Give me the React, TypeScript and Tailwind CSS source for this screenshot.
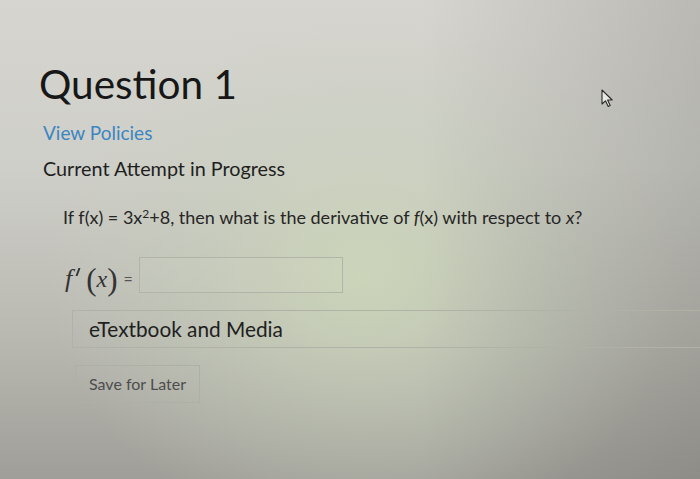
export default function App() {
  return (
    <div
      className="relative h-[479px] w-[700px] overflow-hidden bg-[#bdbdb6] font-['Lato','Liberation_Sans',sans-serif] text-[#1e1e1e]"
    >
      {/* screen glow from the photo */}
      <div className="absolute inset-0 bg-[linear-gradient(180deg,#d6d5d0_0%,#cfcfc9_35%,#b9b9b2_70%,#9f9e98_100%)]" />
      <div className="absolute inset-0 bg-[radial-gradient(ellipse_45%_55%_at_52%_58%,rgba(205,216,185,0.85)_0%,rgba(200,208,186,0.4)_55%,rgba(200,208,186,0)_100%)]" />
      <div className="absolute inset-0 bg-[linear-gradient(90deg,rgba(0,0,0,0)_60%,rgba(60,60,55,0.18)_100%)]" />

      <div className="relative flex flex-col items-start pl-[39px] pt-[60px]">
        <h1 className="text-[40.5px] leading-[48px] font-normal text-[#171717]">Question 1</h1>

        <a className="ml-[4px] mt-[13px] text-[19px] leading-[23px] text-[#3b86c2]">View Policies</a>

        <p className="ml-[4px] mt-[12px] text-[19.8px] leading-[24px] text-[#1f1f1f]">
          Current Attempt in Progress
        </p>

        <p className="ml-[24px] mt-[26px] text-[18px] leading-[22px] text-[#262626]">
          If f(x) = 3x<sup className="text-[12px]">2</sup>+8, then what is the derivative of{" "}
          <i>f</i>(x) with respect to <i>x</i>?
        </p>

        <div className="ml-[26px] mt-[29px] flex items-center">
          <span className="relative top-[4px] flex w-[74px] items-center font-['Liberation_Serif',serif] text-[#333]">
            <i className="text-[26px] leading-none">f</i>
            <span className="relative -top-[7px] ml-[5px] h-[8px] w-[2px] skew-x-[-20deg] bg-[#333]" />
            <span className="ml-[7px] text-[31px] leading-none">(</span>
            <i className="text-[24px] leading-none">x</i>
            <span className="text-[31px] leading-none">)</span>
            <span className="ml-[6px] font-['Lato',sans-serif] text-[16px] leading-none text-[#555]">=</span>
          </span>
          <div className="h-[36px] w-[204px] border border-[#b2b4a8] bg-[rgba(255,255,255,0.04)]" />
        </div>

        <div className="ml-[33px] mt-[17px] flex h-[38px] w-[640px] items-center border border-r-0 border-[#b0b2a6] pl-[16px]">
          <span className="text-[20.8px] text-[#1f1f1f]">eTextbook and Media</span>
        </div>

        <div className="ml-[36px] mt-[17px] flex h-[38px] w-[125px] items-center border border-[#aeb0a5] pl-[13px]">
          <span className="text-[16px] text-[#4d4d4d]">Save for Later</span>
        </div>
      </div>

      {/* mouse pointer */}
      <svg className="absolute left-[601px] top-[89px]" width="13" height="19" viewBox="0 0 13 19">
        <path
          d="M1 1 L1 15 L4.5 11.8 L7.2 17.5 L9.2 16.6 L6.6 11 L11.2 11 Z"
          fill="#e8e8e4"
          stroke="#2a2a2a"
          strokeWidth="1.1"
          strokeLinejoin="round"
        />
      </svg>
    </div>
  );
}
